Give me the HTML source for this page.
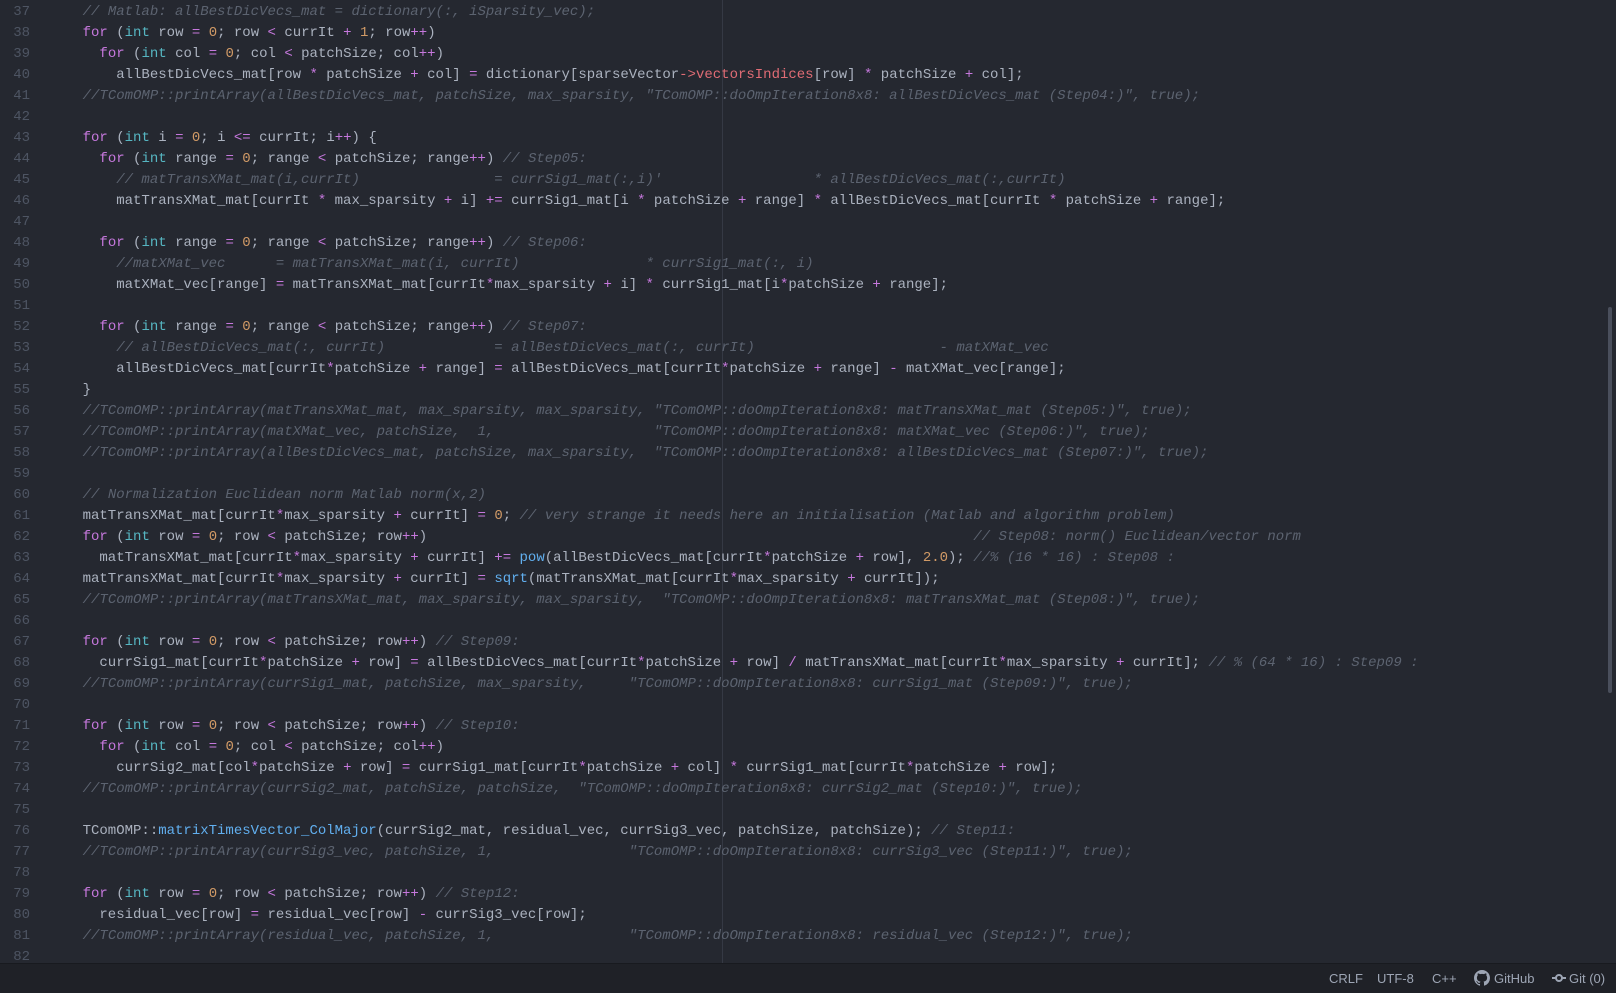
<!DOCTYPE html>
<html><head><meta charset="utf-8"><style>
html,body{margin:0;padding:0;width:1616px;height:993px;overflow:hidden;background:#252830;}
body{font-family:"Liberation Mono","DejaVu Sans Mono",monospace;font-size:14px;color:#abb2bf;position:relative}
#g{position:absolute;left:0;top:2px;width:30px;text-align:right;color:#4e5563}
#g div,#c div{height:21px;line-height:21px;white-space:pre}
#c{position:absolute;left:49px;top:2px}
.k{color:#c678dd}.t{color:#56b6c2}.n{color:#d19a66}.c{color:#5c6370;font-style:italic}.o{color:#c678dd}.f{color:#61afef}.r{color:#e06c75}
#wrap{position:absolute;left:722px;top:0;width:1px;height:963px;background:#353944}
#sb{position:absolute;left:1608px;top:307px;width:4px;height:386px;background:#4a4f5c;border-radius:2px}
#st{position:absolute;left:0;top:963px;width:1616px;height:30px;background:#1f2127;border-top:1px solid #181a1f;font-family:"Liberation Sans",sans-serif;font-size:13px;color:#9da5b4}
#st span{position:absolute;top:7px}
</style></head><body>
<div id="wrap"></div>
<div id="g">
<div>37</div><div>38</div><div>39</div><div>40</div><div>41</div><div>42</div><div>43</div><div>44</div><div>45</div><div>46</div><div>47</div><div>48</div><div>49</div><div>50</div><div>51</div><div>52</div><div>53</div><div>54</div><div>55</div><div>56</div><div>57</div><div>58</div><div>59</div><div>60</div><div>61</div><div>62</div><div>63</div><div>64</div><div>65</div><div>66</div><div>67</div><div>68</div><div>69</div><div>70</div><div>71</div><div>72</div><div>73</div><div>74</div><div>75</div><div>76</div><div>77</div><div>78</div><div>79</div><div>80</div><div>81</div><div>82</div>
</div>
<div id="c">
<div>    <span class="c">// Matlab: allBestDicVecs_mat = dictionary(:, iSparsity_vec);</span></div>
<div>    <span class="k">for</span> (<span class="t">int</span> row <span class="o">=</span> <span class="n">0</span>; row <span class="o">&lt;</span> currIt <span class="o">+</span> <span class="n">1</span>; row<span class="o">++</span>)</div>
<div>      <span class="k">for</span> (<span class="t">int</span> col <span class="o">=</span> <span class="n">0</span>; col <span class="o">&lt;</span> patchSize; col<span class="o">++</span>)</div>
<div>        allBestDicVecs_mat[row <span class="o">*</span> patchSize <span class="o">+</span> col] <span class="o">=</span> dictionary[sparseVector<span class="r">-&gt;vectorsIndices</span>[row] <span class="o">*</span> patchSize <span class="o">+</span> col];</div>
<div>    <span class="c">//TComOMP::printArray(allBestDicVecs_mat, patchSize, max_sparsity, "TComOMP::doOmpIteration8x8: allBestDicVecs_mat (Step04:)", true);</span></div>
<div> </div>
<div>    <span class="k">for</span> (<span class="t">int</span> i <span class="o">=</span> <span class="n">0</span>; i <span class="o">&lt;=</span> currIt; i<span class="o">++</span>) {</div>
<div>      <span class="k">for</span> (<span class="t">int</span> range <span class="o">=</span> <span class="n">0</span>; range <span class="o">&lt;</span> patchSize; range<span class="o">++</span>) <span class="c">// Step05:</span></div>
<div>        <span class="c">// matTransXMat_mat(i,currIt)                = currSig1_mat(:,i)'                  * allBestDicVecs_mat(:,currIt)</span></div>
<div>        matTransXMat_mat[currIt <span class="o">*</span> max_sparsity <span class="o">+</span> i] <span class="o">+=</span> currSig1_mat[i <span class="o">*</span> patchSize <span class="o">+</span> range] <span class="o">*</span> allBestDicVecs_mat[currIt <span class="o">*</span> patchSize <span class="o">+</span> range];</div>
<div> </div>
<div>      <span class="k">for</span> (<span class="t">int</span> range <span class="o">=</span> <span class="n">0</span>; range <span class="o">&lt;</span> patchSize; range<span class="o">++</span>) <span class="c">// Step06:</span></div>
<div>        <span class="c">//matXMat_vec      = matTransXMat_mat(i, currIt)               * currSig1_mat(:, i)</span></div>
<div>        matXMat_vec[range] <span class="o">=</span> matTransXMat_mat[currIt<span class="o">*</span>max_sparsity <span class="o">+</span> i] <span class="o">*</span> currSig1_mat[i<span class="o">*</span>patchSize <span class="o">+</span> range];</div>
<div> </div>
<div>      <span class="k">for</span> (<span class="t">int</span> range <span class="o">=</span> <span class="n">0</span>; range <span class="o">&lt;</span> patchSize; range<span class="o">++</span>) <span class="c">// Step07:</span></div>
<div>        <span class="c">// allBestDicVecs_mat(:, currIt)             = allBestDicVecs_mat(:, currIt)                      - matXMat_vec</span></div>
<div>        allBestDicVecs_mat[currIt<span class="o">*</span>patchSize <span class="o">+</span> range] <span class="o">=</span> allBestDicVecs_mat[currIt<span class="o">*</span>patchSize <span class="o">+</span> range] <span class="o">-</span> matXMat_vec[range];</div>
<div>    }</div>
<div>    <span class="c">//TComOMP::printArray(matTransXMat_mat, max_sparsity, max_sparsity, "TComOMP::doOmpIteration8x8: matTransXMat_mat (Step05:)", true);</span></div>
<div>    <span class="c">//TComOMP::printArray(matXMat_vec, patchSize,  1,                   "TComOMP::doOmpIteration8x8: matXMat_vec (Step06:)", true);</span></div>
<div>    <span class="c">//TComOMP::printArray(allBestDicVecs_mat, patchSize, max_sparsity,  "TComOMP::doOmpIteration8x8: allBestDicVecs_mat (Step07:)", true);</span></div>
<div> </div>
<div>    <span class="c">// Normalization Euclidean norm Matlab norm(x,2)</span></div>
<div>    matTransXMat_mat[currIt<span class="o">*</span>max_sparsity <span class="o">+</span> currIt] <span class="o">=</span> <span class="n">0</span>; <span class="c">// very strange it needs here an initialisation (Matlab and algorithm problem)</span></div>
<div>    <span class="k">for</span> (<span class="t">int</span> row <span class="o">=</span> <span class="n">0</span>; row <span class="o">&lt;</span> patchSize; row<span class="o">++</span>)                                                                 <span class="c">// Step08: norm() Euclidean/vector norm</span></div>
<div>      matTransXMat_mat[currIt<span class="o">*</span>max_sparsity <span class="o">+</span> currIt] <span class="o">+=</span> <span class="f">pow</span>(allBestDicVecs_mat[currIt<span class="o">*</span>patchSize <span class="o">+</span> row], <span class="n">2.0</span>); <span class="c">//% (16 * 16) : Step08 :</span></div>
<div>    matTransXMat_mat[currIt<span class="o">*</span>max_sparsity <span class="o">+</span> currIt] <span class="o">=</span> <span class="f">sqrt</span>(matTransXMat_mat[currIt<span class="o">*</span>max_sparsity <span class="o">+</span> currIt]);</div>
<div>    <span class="c">//TComOMP::printArray(matTransXMat_mat, max_sparsity, max_sparsity,  "TComOMP::doOmpIteration8x8: matTransXMat_mat (Step08:)", true);</span></div>
<div> </div>
<div>    <span class="k">for</span> (<span class="t">int</span> row <span class="o">=</span> <span class="n">0</span>; row <span class="o">&lt;</span> patchSize; row<span class="o">++</span>) <span class="c">// Step09:</span></div>
<div>      currSig1_mat[currIt<span class="o">*</span>patchSize <span class="o">+</span> row] <span class="o">=</span> allBestDicVecs_mat[currIt<span class="o">*</span>patchSize <span class="o">+</span> row] <span class="o">/</span> matTransXMat_mat[currIt<span class="o">*</span>max_sparsity <span class="o">+</span> currIt]; <span class="c">// % (64 * 16) : Step09 :</span></div>
<div>    <span class="c">//TComOMP::printArray(currSig1_mat, patchSize, max_sparsity,     "TComOMP::doOmpIteration8x8: currSig1_mat (Step09:)", true);</span></div>
<div> </div>
<div>    <span class="k">for</span> (<span class="t">int</span> row <span class="o">=</span> <span class="n">0</span>; row <span class="o">&lt;</span> patchSize; row<span class="o">++</span>) <span class="c">// Step10:</span></div>
<div>      <span class="k">for</span> (<span class="t">int</span> col <span class="o">=</span> <span class="n">0</span>; col <span class="o">&lt;</span> patchSize; col<span class="o">++</span>)</div>
<div>        currSig2_mat[col<span class="o">*</span>patchSize <span class="o">+</span> row] <span class="o">=</span> currSig1_mat[currIt<span class="o">*</span>patchSize <span class="o">+</span> col] <span class="o">*</span> currSig1_mat[currIt<span class="o">*</span>patchSize <span class="o">+</span> row];</div>
<div>    <span class="c">//TComOMP::printArray(currSig2_mat, patchSize, patchSize,  "TComOMP::doOmpIteration8x8: currSig2_mat (Step10:)", true);</span></div>
<div> </div>
<div>    TComOMP::<span class="f">matrixTimesVector_ColMajor</span>(currSig2_mat, residual_vec, currSig3_vec, patchSize, patchSize); <span class="c">// Step11:</span></div>
<div>    <span class="c">//TComOMP::printArray(currSig3_vec, patchSize, 1,                "TComOMP::doOmpIteration8x8: currSig3_vec (Step11:)", true);</span></div>
<div> </div>
<div>    <span class="k">for</span> (<span class="t">int</span> row <span class="o">=</span> <span class="n">0</span>; row <span class="o">&lt;</span> patchSize; row<span class="o">++</span>) <span class="c">// Step12:</span></div>
<div>      residual_vec[row] <span class="o">=</span> residual_vec[row] <span class="o">-</span> currSig3_vec[row];</div>
<div>    <span class="c">//TComOMP::printArray(residual_vec, patchSize, 1,                "TComOMP::doOmpIteration8x8: residual_vec (Step12:)", true);</span></div>
<div> </div>
</div>
<div id="sb"></div>
<div id="st">
<span style="left:1329px">CRLF</span>
<span style="left:1377px">UTF-8</span>
<span style="left:1432px">C++</span>
<span style="left:1474px;top:6px"><svg width="16" height="16" viewBox="0 0 16 16"><path fill="#9da5b4" d="M8 0C3.58 0 0 3.58 0 8c0 3.54 2.29 6.53 5.47 7.59.4.07.55-.17.55-.38v-1.33c-2.23.48-2.7-1.070-2.7-1.07-.36-.92-.89-1.17-.89-1.17-.73-.5.06-.49.06-.49.8.06 1.23.83 1.23.83.71 1.22 1.87.87 2.33.66.07-.52.28-.87.51-1.07-1.78-.2-3.64-.89-3.64-3.950 0-.87.31-1.59.82-2.15-.08-.2-.36-1.02.08-2.12 0 0 .67-.21 2.2.82.64-.18 1.32-.27 2-.27.68 0 1.36.09 2 .27 1.53-1.04 2.2-.82 2.2-.82.44 1.1.16 1.92.08 2.12.51.56.82 1.27.82 2.150 0 3.07-1.87 3.75-3.65 3.95.29.25.54.73.54 1.48v2.2c0 .21.15.46.55.38A8.01 8.01 0 0016 8c0-4.42-3.58-8-8-8z"/></svg></span>
<span style="left:1494px">GitHub</span>
<span style="left:1552px;top:6px"><svg width="14" height="16" viewBox="0 0 14 16"><circle cx="7" cy="8" r="3" fill="none" stroke="#9da5b4" stroke-width="2"/><path d="M0 8h4M10 8h4" stroke="#9da5b4" stroke-width="2"/></svg></span>
<span style="left:1569px">Git (0)</span>
</div>
</body></html>
